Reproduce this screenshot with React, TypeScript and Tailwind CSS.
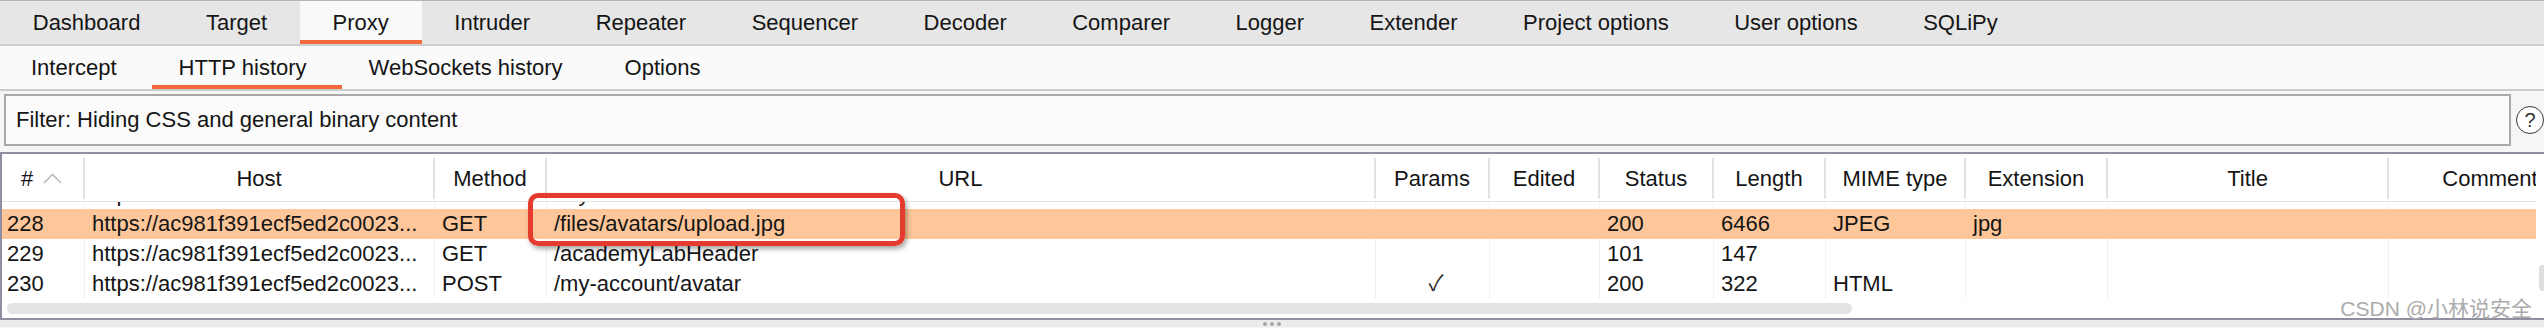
import React from "react";

const topTabs = [
  "Dashboard",
  "Target",
  "Proxy",
  "Intruder",
  "Repeater",
  "Sequencer",
  "Decoder",
  "Comparer",
  "Logger",
  "Extender",
  "Project options",
  "User options",
  "SQLiPy",
];

const subTabs = ["Intercept", "HTTP history", "WebSockets history", "Options"];

const cols = [
  { label: "#", w: 83 },
  { label: "Host", w: 350 },
  { label: "Method", w: 112 },
  { label: "URL", w: 829 },
  { label: "Params", w: 114 },
  { label: "Edited", w: 110 },
  { label: "Status", w: 114 },
  { label: "Length", w: 112 },
  { label: "MIME type", w: 140 },
  { label: "Extension", w: 142 },
  { label: "Title", w: 281 },
  { label: "Comment", w: 202 },
];

const host = "https://ac981f391ecf5ed2c0023...";

const rows: { cells: string[]; sel?: boolean }[] = [
  { cells: ["227", host, "GET", "/my-account", "", "", "200", "3456", "HTML", "", "", ""] },
  { cells: ["228", host, "GET", "/files/avatars/upload.jpg", "", "", "200", "6466", "JPEG", "jpg", "", ""], sel: true },
  { cells: ["229", host, "GET", "/academyLabHeader", "", "", "101", "147", "", "", "", ""] },
  { cells: ["230", host, "POST", "/my-account/avatar", "✓", "", "200", "322", "HTML", "", "", ""] },
];

export default function App() {
  return (
    <div className="relative w-[2544px] h-[328px] overflow-hidden bg-[#f6f6f6] font-['Liberation_Sans','Noto_Sans_CJK_SC',sans-serif] text-[22px] leading-none text-[#151515]">
      {/* Top tab bar */}
      <div className="flex h-[46px] border-t border-[#b4b4b4] border-b-2 border-b-[#cecece] bg-[#e6e6e6]">
        {topTabs.map((t) => (
          <div
            key={t}
            className={
              t === "Proxy"
                ? "relative flex items-center px-[32.75px] bg-[#f9f9f9]"
                : "relative flex items-center px-[32.75px]"
            }
          >
            <span>{t}</span>
            {t === "Proxy" && <div className="absolute left-0 right-0 bottom-0 h-[4px] bg-[#f36b3b]" />}
          </div>
        ))}
      </div>

      {/* Sub tab bar */}
      <div className="flex h-[45px] border-b-2 border-[#cccccc] bg-[#fafafa]">
        {subTabs.map((t) => (
          <div key={t} className="relative flex items-center px-[31px]">
            <span>{t}</span>
            {t === "HTTP history" && <div className="absolute left-[4px] right-[-4px] bottom-0 h-[4px] bg-[#f36b3b]" />}
          </div>
        ))}
      </div>

      {/* Filter */}
      <div className="flex items-center pt-[3px] pb-[6px] pl-[4px]">
        <div className="flex items-center w-[2509px] h-[52px] border-2 border-[#a9a9a9] bg-[#fbfbfb] pl-[10px]">
          Filter: Hiding CSS and general binary content
        </div>
        <div className="ml-[5px] flex items-center justify-center w-[28px] h-[28px] shrink-0 rounded-full border-[1.5px] border-[#3a3a3a] text-[20px] text-[#333] bg-white">
          ?
        </div>
      </div>

      {/* Table */}
      <div className="flex border-t-2 border-b-2 border-[#8f8f9f] bg-white">
        <div className="w-[2536px] shrink-0 overflow-hidden border-l-2 border-[#8f8f9f]">
          {/* Header */}
          <div className="flex h-[48px] border-b border-[#e3e3e3]">
            {cols.map((c, i) => (
              <div key={i} className="shrink-0 pt-[4px] pb-[2px]" style={{ width: c.w }}>
                <div
                  className={
                    i === cols.length - 1
                      ? "h-full flex items-center justify-center"
                      : "h-full flex items-center justify-center border-r-2 border-[#e2e2e2]"
                  }
                >
                  {i === 0 ? (
                    <span className="flex items-center gap-[10px] -ml-[2px]">
                      <span>#</span>
                      <svg width="19" height="11" viewBox="0 0 19 11">
                        <polyline points="1,10 9.5,1.5 18,10" fill="none" stroke="#bcbcbc" strokeWidth="1.6" />
                      </svg>
                    </span>
                  ) : (
                    <span>{c.label}</span>
                  )}
                </div>
              </div>
            ))}
          </div>

          {/* Body */}
          <div className="h-[97px] overflow-hidden">
            {rows.map((r, ri) => (
              <div
                key={ri}
                className={
                  (r.sel ? "bg-[#ffc799] " : "bg-white ") + (ri === 0 ? "-mt-[23px] " : "") + "flex h-[30px]"
                }
              >
                {r.cells.map((v, ci) => (
                  <div
                    key={ci}
                    className={
                      "shrink-0 flex items-center whitespace-nowrap overflow-hidden " +
                      (ci === 0 ? "pl-[5px] " : "pl-[7px] ") +
                      (ci === 4 ? "justify-center pl-0 text-[#333] " : "") +
                      (r.sel ? "border-r border-[#ffc799]" : "border-r border-[#f1f1f1]")
                    }
                    style={{ width: cols[ci].w }}
                  >
                    {v}
                  </div>
                ))}
              </div>
            ))}
          </div>

          {/* Horizontal scrollbar */}
          <div className="h-[19px] flex items-center pl-[5px]">
            <div className="w-[1845px] h-[11px] rounded-full bg-[#e3e3e3]" />
          </div>
        </div>
        {/* Vertical scrollbar */}
        <div className="flex-1 flex flex-col bg-white">
          <div className="h-[49px]" />
          <div className="h-[62px]" />
          <div className="ml-[3px] h-[26px] rounded-l-[4px] bg-[#dedede]" />
        </div>
      </div>

      {/* Bottom strip with drag handle */}
      <div className="h-[7px] flex items-center justify-center gap-[3px] bg-[#ececec]">
        <div className="w-[4px] h-[4px] rounded-full bg-[#a5a5a5]" />
        <div className="w-[4px] h-[4px] rounded-full bg-[#a5a5a5]" />
        <div className="w-[4px] h-[4px] rounded-full bg-[#a5a5a5]" />
      </div>

      {/* Red annotation box */}
      <div className="absolute left-[528px] top-[193px] w-[377px] h-[53px] border-[5px] border-[#e53b2e] rounded-[10px] shadow-[2px_3px_5px_rgba(0,0,0,0.35)]" />

      {/* Watermark */}
      <div className="absolute right-[12px] top-[298px] text-[21px] text-[#ababab] whitespace-nowrap">
        CSDN @小林说安全
      </div>
    </div>
  );
}
